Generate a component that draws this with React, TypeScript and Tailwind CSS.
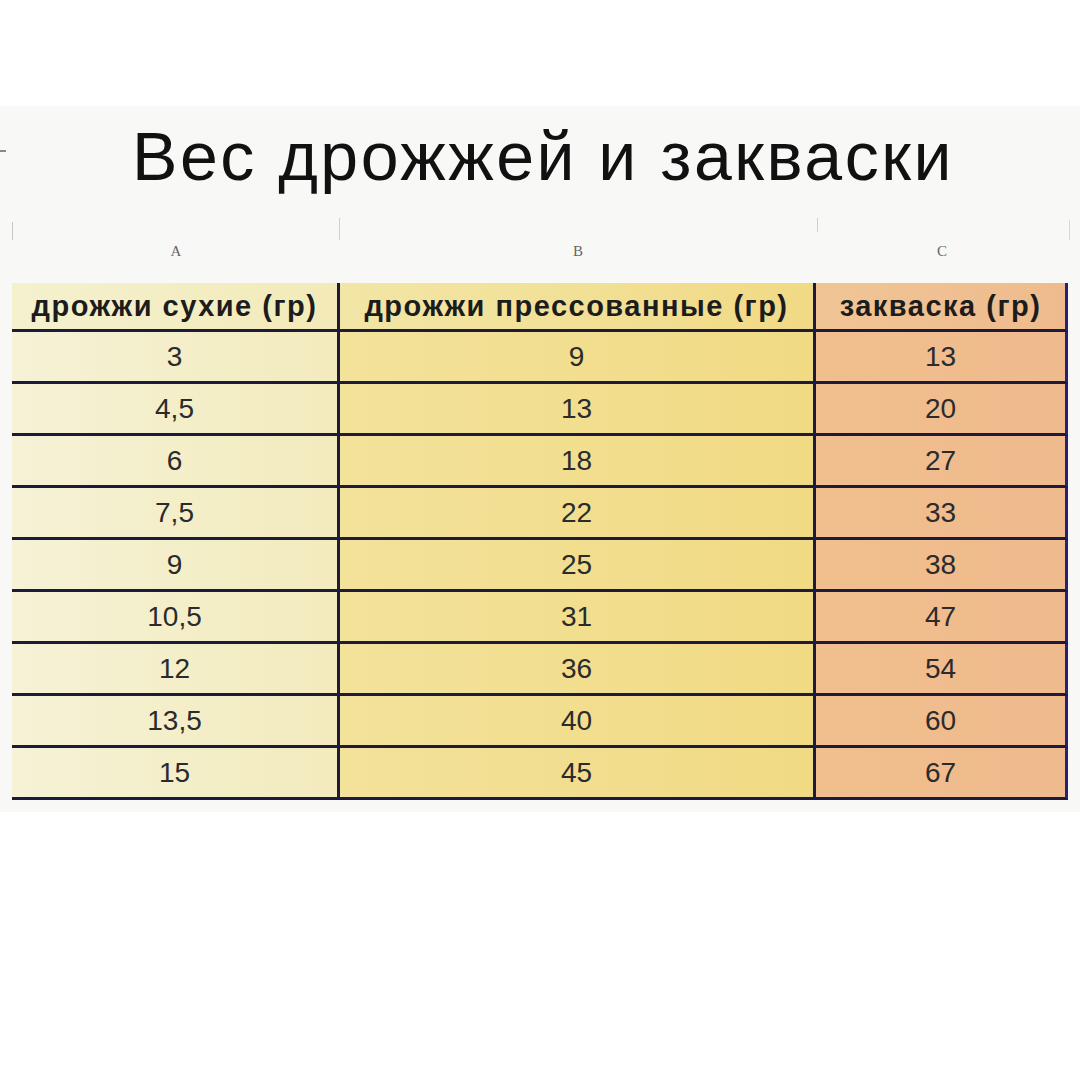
const rows: [string, string, string][] = [
  ['3', '9', '13'],
  ['4,5', '13', '20'],
  ['6', '18', '27'],
  ['7,5', '22', '33'],
  ['9', '25', '38'],
  ['10,5', '31', '47'],
  ['12', '36', '54'],
  ['13,5', '40', '60'],
  ['15', '45', '67'],
];

export default function App() {
  return (
    <div className="w-[1080px] h-[1080px] bg-white overflow-hidden" style={{ fontFamily: '"Liberation Sans", Arial, sans-serif' }}>
      <div className="pt-[106px]">
        <div className="relative bg-[#f8f8f7] pb-[12px]">
          {/* left tick */}
          <div className="absolute left-0 top-[44px] w-[6px] h-[2px] bg-[#888]" />

          <h1 className="pt-[10px] h-[108px] text-center text-[68px] leading-[80px] tracking-[2.5px] text-[#111] pl-[6px]">
            Вес дрожжей и закваски
          </h1>

          <div className="ml-[12px] w-[1056px]">
            {/* column letters */}
            <div className="grid grid-cols-[328px_476px_252px] h-[69px] text-[#666] text-[15px]" style={{ fontFamily: '"Liberation Serif", serif' }}>
              <div className="relative flex items-center justify-center pt-[6px]">
                <span className="absolute left-0 top-[8px] w-px h-[18px] bg-[#c8c8c8]" />
                <span className="absolute right-0 top-[4px] w-px h-[22px] bg-[#d0d0d0]" />
                A
              </div>
              <div className="relative flex items-center justify-center pt-[6px]">
                <span className="absolute right-[-2px] top-[4px] w-px h-[14px] bg-[#d0d0d0]" />
                B
              </div>
              <div className="relative flex items-center justify-center pt-[6px]">
                <span className="absolute right-[-2px] top-[6px] w-px h-[20px] bg-[#d8d8d8]" />
                C
              </div>
            </div>

            {/* header row */}
            <div className="grid grid-cols-[328px_476px_252px] h-[49px] text-[29px] font-bold text-[#1c1c1c] leading-none tracking-[1.5px]">
              <div className="flex items-center justify-center bg-gradient-to-r from-[#f4f1cf] to-[#f3eab8] border-b-[3px] border-[#1d1b3c] border-r-[3px]">
                дрожжи сухие (гр)
              </div>
              <div className="flex items-center justify-center bg-gradient-to-r from-[#f2e6a6] to-[#f1da85] border-b-[3px] border-[#1d1b3c] border-r-[3px]">
                дрожжи прессованные (гр)
              </div>
              <div className="flex items-center justify-center bg-gradient-to-r from-[#f0c596] to-[#efbb8d] border-b-[3px] border-[#1d1b3c] border-r-[3px] border-r-[#2a1f7a]">
                закваска (гр)
              </div>
            </div>

            {/* data rows */}
            {rows.map((r, i) => (
              <div key={i} className="grid grid-cols-[328px_476px_252px] h-[52px] text-[28px] text-[#2b2b2b]">
                <div className="flex items-center justify-center bg-gradient-to-r from-[#f5f2d6] to-[#f3ebbd] border-b-[3px] border-[#1d1b3c] border-r-[3px]">
                  {r[0]}
                </div>
                <div className="flex items-center justify-center bg-gradient-to-r from-[#f3e29a] to-[#f1da84] border-b-[3px] border-[#1d1b3c] border-r-[3px]">
                  {r[1]}
                </div>
                <div className="flex items-center justify-center bg-gradient-to-r from-[#f1bf8e] to-[#efba8c] border-b-[3px] border-[#1d1b3c] border-r-[3px] border-r-[#2a1f7a]">
                  {r[2]}
                </div>
              </div>
            ))}
          </div>
        </div>
      </div>
    </div>
  );
}
